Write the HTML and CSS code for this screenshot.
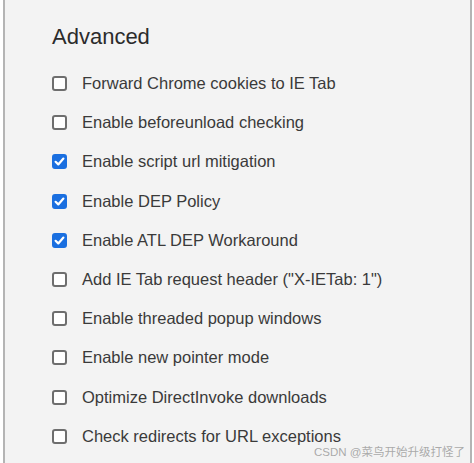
FILE: index.html
```html
<!DOCTYPE html>
<html>
<head>
<meta charset="utf-8">
<link rel="stylesheet" href="styles.css">
</head>
<body>
<div class="panel">
  <h2 class="title">Advanced</h2>
  <div class="list">
    <div class="row"><span class="box"></span><span>Forward Chrome cookies to IE Tab</span></div>
    <div class="row"><span class="box"></span><span>Enable beforeunload checking</span></div>
    <div class="row"><span class="box checked"><svg viewBox="0 0 15 15" width="15" height="15"><path d="M3.6 7.8 L6.3 10.4 L11.4 4.6" fill="none" stroke="#fff" stroke-width="2.2" stroke-linecap="round" stroke-linejoin="round"/></svg></span><span>Enable script url mitigation</span></div>
    <div class="row"><span class="box checked"><svg viewBox="0 0 15 15" width="15" height="15"><path d="M3.6 7.8 L6.3 10.4 L11.4 4.6" fill="none" stroke="#fff" stroke-width="2.2" stroke-linecap="round" stroke-linejoin="round"/></svg></span><span>Enable DEP Policy</span></div>
    <div class="row"><span class="box checked"><svg viewBox="0 0 15 15" width="15" height="15"><path d="M3.6 7.8 L6.3 10.4 L11.4 4.6" fill="none" stroke="#fff" stroke-width="2.2" stroke-linecap="round" stroke-linejoin="round"/></svg></span><span>Enable ATL DEP Workaround</span></div>
    <div class="row"><span class="box"></span><span>Add IE Tab request header ("X-IETab: 1")</span></div>
    <div class="row"><span class="box"></span><span>Enable threaded popup windows</span></div>
    <div class="row"><span class="box"></span><span>Enable new pointer mode</span></div>
    <div class="row"><span class="box"></span><span>Optimize DirectInvoke downloads</span></div>
    <div class="row"><span class="box"></span><span>Check redirects for URL exceptions</span></div>
  </div>
  <div class="watermark">CSDN @菜鸟开始升级打怪了</div>
</div>
</body>
</html>
```
FILE: styles.css
```css
html, body {
  margin: 0;
  padding: 0;
  background: #ffffff;
  height: 100%;
}
body {
  font-family: "Liberation Sans", Arial, sans-serif;
  overflow: hidden;
}
.panel {
  position: relative;
  margin-left: 3px;
  width: 469px;
  height: 463px;
  background: #f3f3f3;
  border-left: 2px solid #b4b4b4;
  border-right: 2px solid #b4b4b4;
  padding-left: 47px;
  box-sizing: border-box;
}
.title {
  margin: 0;
  padding-top: 24px;
  font-weight: normal;
  font-size: 22px;
  line-height: 26px;
  color: #2b2b2b;
}
.list {
  display: flex;
  flex-direction: column;
  margin-top: 14px;
}
.row {
  display: flex;
  align-items: center;
  height: 39.2px;
  font-size: 16.5px;
  color: #3a3a3a;
}
.box {
  flex: none;
  width: 15px;
  height: 15px;
  margin-right: 15px;
  box-sizing: border-box;
  border: 2px solid #6e6e6e;
  border-radius: 3px;
  background: #ffffff;
  position: relative;
}
.box.checked {
  background: #1a6fe0;
  border-color: #1a6fe0;
}
.box svg {
  position: absolute;
  left: -2px;
  top: -2px;
}
.watermark {
  position: absolute;
  right: 5px;
  bottom: 4px;
  font-family: "Liberation Sans", "Noto Sans CJK SC", sans-serif;
  font-size: 11.5px;
  color: rgba(150, 150, 150, 0.8);
}
```
